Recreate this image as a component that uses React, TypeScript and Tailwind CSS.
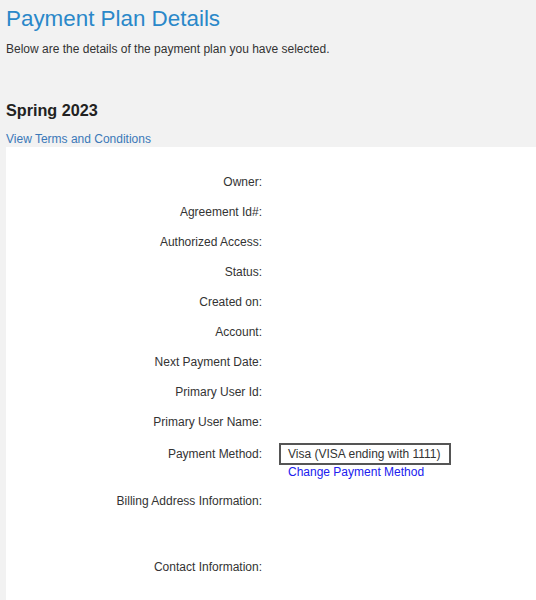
import React from "react";

const rows = [
  "Owner:",
  "Agreement Id#:",
  "Authorized Access:",
  "Status:",
  "Created on:",
  "Account:",
  "Next Payment Date:",
  "Primary User Id:",
  "Primary User Name:",
];

export default function App() {
  return (
    <div
      className="min-h-[600px] bg-[#f2f2f2] text-[#333] overflow-hidden"
      style={{ fontFamily: '"Liberation Sans", Arial, sans-serif' }}
    >
      <div className="pl-[6px] pt-[4px]">
        <h1 className="text-[22.4px] leading-[30px] text-[#2a88c9] font-normal">
          Payment Plan Details
        </h1>
        <p className="text-[12px] leading-[16px] mt-[7px]">
          Below are the details of the payment plan you have selected.
        </p>
        <h2 className="text-[16.2px] leading-[20px] font-bold text-[#222] mt-[43px]">
          Spring 2023
        </h2>
        <a className="block text-[12px] leading-[16px] text-[#3a78b8] mt-[11px]" href="#">
          View Terms and Conditions
        </a>
      </div>
      <div className="ml-[6px] mt-0 bg-white min-h-[460px] pt-[20px] text-[12px]">
        {rows.map((r) => (
          <div key={r} className="flex h-[30px] leading-[30px]">
            <div className="w-[256px] text-right">{r}</div>
          </div>
        ))}
        <div className="flex mt-[6px]">
          <div className="w-[256px] text-right leading-[22px]">Payment Method:</div>
          <div className="ml-[17px]">
            <div className="h-[22px] border-2 border-[#555] px-[7px] leading-[18px] w-[172px]">
              Visa (VISA ending with 1111)
            </div>
            <a href="#" className="block pl-[9px] leading-[14px] text-[#2020ee]">
              Change Payment Method
            </a>
          </div>
        </div>
        <div className="flex mt-[11px]">
          <div className="w-[256px] text-right leading-[22px]">Billing Address Information:</div>
        </div>
        <div className="flex mt-[44px]">
          <div className="w-[256px] text-right leading-[22px]">Contact Information:</div>
        </div>
      </div>
    </div>
  );
}
